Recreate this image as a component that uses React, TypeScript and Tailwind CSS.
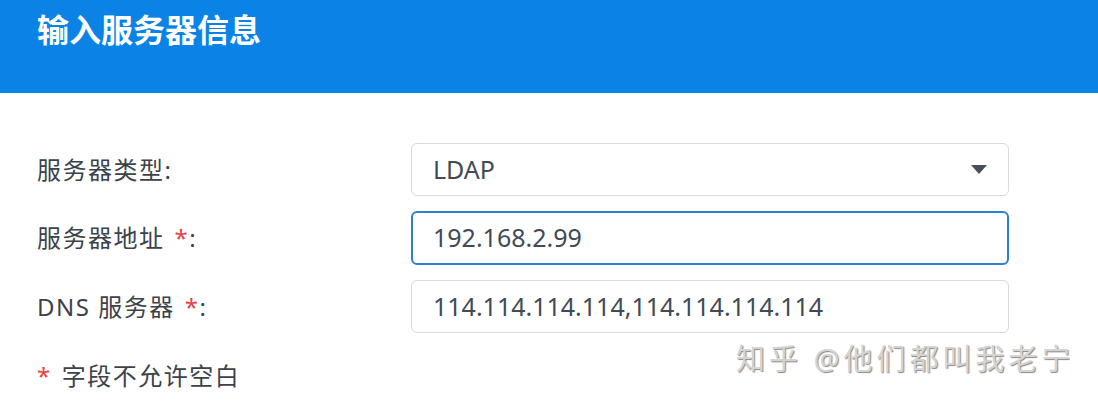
const font = "font-['Noto_Sans','Noto_Sans_CJK_SC',sans-serif]";

const Req = () => <span className="text-[#e64545] ml-[10px]">*</span>;

const Row = ({ label, required, children }: { label: string; required?: boolean; children: React.ReactNode }) => (
  <div className="flex items-center">
    <div className="w-[374px] text-[24px] tracking-[1.5px] text-[#3b424a]">
      {label}
      {required && <Req />}:
    </div>
    {children}
  </div>
);

export default function App() {
  return (
    <div className={`relative w-[1098px] h-[408px] bg-white overflow-hidden ${font}`}>
      <div className="h-[93px] bg-[#0a82e6] pl-[37px] pt-[7px]">
        <h1 className="text-[32px] font-bold text-white leading-[46px]">输入服务器信息</h1>
      </div>

      <div className="pl-[37px] pt-[50px] flex flex-col gap-[15px]">
        <Row label="服务器类型">
          <div className="w-[598px] h-[53px] border border-[#d6dbe0] rounded-[6px] pl-[21px] pr-[21px] flex items-center justify-between text-[25px] text-[#414a55]">
            <span>LDAP</span>
            <svg width="16" height="9" viewBox="0 0 16 9">
              <path d="M0 0 H16 L8 9 Z" fill="#4a4f57" />
            </svg>
          </div>
        </Row>
        <Row label="服务器地址" required>
          <div className="w-[598px] h-[54px] border-2 border-[#2f7fd0] rounded-[6px] pl-[20px] flex items-center text-[25px] text-[#414a55]">
            192.168.2.99
          </div>
        </Row>
        <Row label="DNS 服务器" required>
          <div className="w-[598px] h-[53px] border border-[#d6dbe0] rounded-[6px] pl-[21px] flex items-center text-[25px] text-[#414a55]">
            114.114.114.114,114.114.114.114
          </div>
        </Row>
        <div className="mt-[10px] text-[24px] tracking-[1.5px] text-[#3b424a]">
          <span className="text-[#e64545] mr-[10px]">*</span>字段不允许空白
        </div>
      </div>

      <div className="absolute left-[736px] top-[337px] text-[29px] tracking-[4px] text-[#d4d4d4] [text-shadow:1px_1px_1px_#8a8a8a]">
        知乎 @他们都叫我老宁
      </div>
    </div>
  );
}
